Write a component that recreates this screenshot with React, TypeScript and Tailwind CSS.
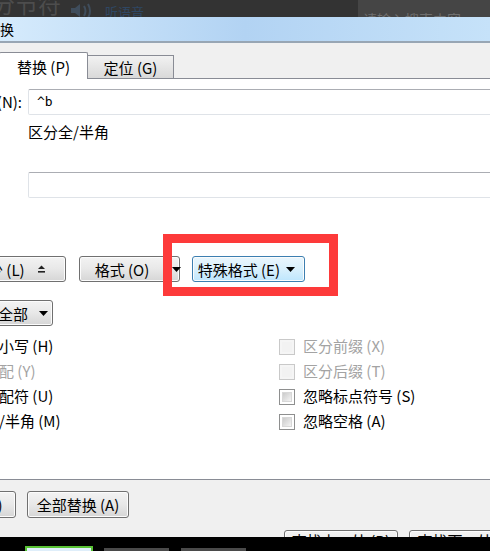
import React from 'react';

const btn =
  'h-[26px] flex items-center shrink-0 rounded-[3px] border border-[#707070] bg-gradient-to-b from-[#f3f3f3] via-[#e8e8e8] to-[#d6d6d6] text-[15px] text-black leading-none whitespace-nowrap shadow-[inset_0_0_0_1px_#fcfcfc]';

const input =
  'h-[26px] w-[500px] shrink-0 rounded-[2px] border border-[#dfe3e8] border-t-[#abadb3] bg-white text-[14px] px-2 flex items-center';

function Arrow() {
  return (
    <svg width="9" height="5" viewBox="0 0 9 5" className="shrink-0">
      <path d="M0 0 L9 0 L4.5 5 Z" fill="#000" />
    </svg>
  );
}

function LessIcon() {
  return (
    <svg width="9" height="9" viewBox="0 0 9 9" className="shrink-0">
      <path d="M1 4 L4.5 0.5 L8 4 Z" fill="#222" />
      <rect x="1" y="6" width="7" height="1.6" fill="#222" />
    </svg>
  );
}

function Check({ disabled }: { disabled?: boolean }) {
  return (
    <div
      className={
        disabled
          ? 'w-[16px] h-[16px] shrink-0 border border-[#c9c9c9] bg-[#f5f5f5] flex items-center justify-center'
          : 'w-[16px] h-[16px] shrink-0 border border-[#8e8f8f] bg-white flex items-center justify-center'
      }
    >
      <div
        className={
          disabled
            ? 'w-[10px] h-[10px] bg-[#f2f2f2]'
            : 'w-[10px] h-[10px] bg-gradient-to-br from-[#cbcbcb] to-[#f4f4f4] border border-[#d8d8d8]'
        }
      />
    </div>
  );
}

const rows = [
  { left: '区分大小写 (H)', leftOff: false, right: '区分前缀 (X)', rightOff: true },
  { left: '全字匹配 (Y)', leftOff: true, right: '区分后缀 (T)', rightOff: true },
  { left: '使用通配符 (U)', leftOff: false, right: '忽略标点符号 (S)', rightOff: false },
  { left: '区分全/半角 (M)', leftOff: false, right: '忽略空格 (A)', rightOff: false },
];

export default function App() {
  return (
    <div className="w-[490px] h-[551px] overflow-hidden relative flex flex-col bg-[#f0f0f0] font-['Noto_Sans_CJK_SC','Liberation_Sans',sans-serif] text-black">
      {/* page behind the dialog */}
      <div className="h-[17px] shrink-0 bg-[#333333] flex items-start overflow-hidden">
        <span className="ml-[-8px] mt-[-12px] text-[23px] leading-[30px] text-[#4d4d4d] whitespace-nowrap">分节符</span>
        <svg width="26" height="14" viewBox="0 0 26 14" className="ml-[8px] mt-[3px] shrink-0">
          <path d="M2 5 H6 L11 1 V14 L6 10 H2 Z" fill="#3f4d5c" />
          <path d="M15 3 Q18 8 15 13" stroke="#3f4d5c" strokeWidth="2" fill="none" />
          <path d="M19 1 Q23 8 19 15" stroke="#3f4d5c" strokeWidth="2" fill="none" />
        </svg>
        <span className="ml-[10px] mt-[4px] text-[13px] leading-[16px] text-[#2f4763] whitespace-nowrap">听语音</span>
        <div className="ml-auto w-[132px] h-full bg-[#454545] pl-[5px] pt-[6px]">
          <span className="text-[14px] leading-[16px] text-[#6e6e6e] whitespace-nowrap">请输入搜索内容</span>
        </div>
      </div>

      {/* title bar */}
      <div className="h-[26px] shrink-0 bg-gradient-to-r from-[#d6ebfc] via-[#b2d3f3] to-[#c6e2f9] border-b-2 border-[#98a6b4] flex items-center overflow-hidden">
        <span className="ml-[-14px] text-[14px] leading-none whitespace-nowrap">替换</span>
      </div>

      {/* dialog body */}
      <div className="h-[494px] shrink-0 overflow-hidden pt-[9px] flex flex-col">
        <div className="h-[26px] flex items-end relative z-10 shrink-0">
          <div className="w-[89px] h-[27px] -mb-px bg-white border border-b-0 border-[#898c95] rounded-t-[2px] flex items-center justify-center text-[15px] leading-none ml-[-1px]">
            替换 (P)
          </div>
          <div className="w-[86px] h-[23px] bg-gradient-to-b from-[#f2f2f2] to-[#d9d9d9] border border-b-0 border-l-0 border-[#898c95] flex items-center justify-center text-[15px] leading-none">
            定位 (G)
          </div>
        </div>

        <div className="h-[402px] shrink-0 bg-white border-y border-[#898c95] flex flex-col overflow-hidden">
          <div className="mt-[10px] flex items-center">
            <div className="w-[22px] overflow-hidden flex justify-end shrink-0">
              <span className="text-[15px] whitespace-nowrap">查找内容 (N):</span>
            </div>
            <div className={input + ' ml-[6px]'}>
              <span className="font-['DejaVu_Sans_Mono',monospace] text-[13px]">^b</span>
            </div>
          </div>

          <div className="mt-[7px] ml-[28px] h-[20px] flex items-center text-[15px]">区分全/半角</div>

          <div className={input + ' mt-[30px] ml-[28px]'} />

          <div className="mt-[58px] flex items-center gap-[12px]">
            <div className={btn + ' ml-[-50px] pl-[22px] pr-[19px]'}>
              更少 (L)
              <span className="ml-[12px]">
                <LessIcon />
              </span>
            </div>
            <div className={btn + ' ml-[1px] w-[101px] pl-[15px]'}>
              格式 (O)
              <span className="ml-[23px]">
                <Arrow />
              </span>
            </div>
            <div className="h-[26px] w-[113px] flex items-center shrink-0 rounded-[3px] border border-[#3c7fb1] bg-gradient-to-b from-[#eaf6fd] via-[#d9f0fc] to-[#bee6fd] text-[15px] leading-none whitespace-nowrap shadow-[inset_0_0_0_1px_#fcfcfc] pl-[5px]">
              特殊格式 (E)
              <span className="ml-[6px]">
                <Arrow />
              </span>
            </div>
          </div>

          <div className="mt-[18px] flex">
            <div className={btn + ' ml-[-20px] w-[73px] pl-[17px]'}>
              全部
              <span className="ml-[11px]">
                <Arrow />
              </span>
            </div>
          </div>

          <div className="mt-[8px] flex flex-col">
            {rows.map((r) => (
              <div key={r.right} className="h-[25px] flex items-center ml-[-70px]">
                <div className="w-[349px] shrink-0 flex items-center gap-[8px]">
                  <Check disabled={r.leftOff} />
                  <span className={'text-[15px] whitespace-nowrap ' + (r.leftOff ? 'text-[#a3a3a3]' : 'text-black')}>
                    {r.left}
                  </span>
                </div>
                <div className="flex items-center gap-[8px]">
                  <Check disabled={r.rightOff} />
                  <span className={'text-[15px] whitespace-nowrap ' + (r.rightOff ? 'text-[#a3a3a3]' : 'text-black')}>
                    {r.right}
                  </span>
                </div>
              </div>
            ))}
          </div>
        </div>

        <div className="mt-[11px] flex items-center gap-[11px] shrink-0">
          <div className={btn + ' ml-[-64px] w-[80px] h-[27px] justify-center'}>替换 (R)</div>
          <div className={btn + ' w-[102px] h-[27px] justify-center'}>全部替换 (A)</div>
        </div>
        <div className="mt-[12px] flex items-start gap-[11px] shrink-0 ml-[284px]">
          <div className={btn + ' w-[114px] h-[27px] justify-center items-start pt-[2px]'}>查找上一处 (B)</div>
          <div className={btn + ' w-[114px] h-[27px] justify-center items-start pt-[2px]'}>查找下一处 (F)</div>
        </div>
      </div>

      {/* taskbar */}
      <div className="h-[14px] shrink-0 bg-black flex items-start pt-[9px]">
        <div className="ml-[25px] w-[68px] h-[8px] border-2 border-b-0 border-[#58c234] bg-[#dfeefa]" />
        <div className="ml-[11px] w-[65px] h-[6px] mt-[2px] bg-[#4a4a4a]" />
        <div className="ml-[12px] w-[65px] h-[6px] mt-[2px] bg-[#4a4a4a]" />
      </div>

      {/* red annotation box */}
      <div className="absolute left-[163px] top-[234px] w-[175px] h-[62px] border-[9px] border-[#fd3a3a]" />
    </div>
  );
}
